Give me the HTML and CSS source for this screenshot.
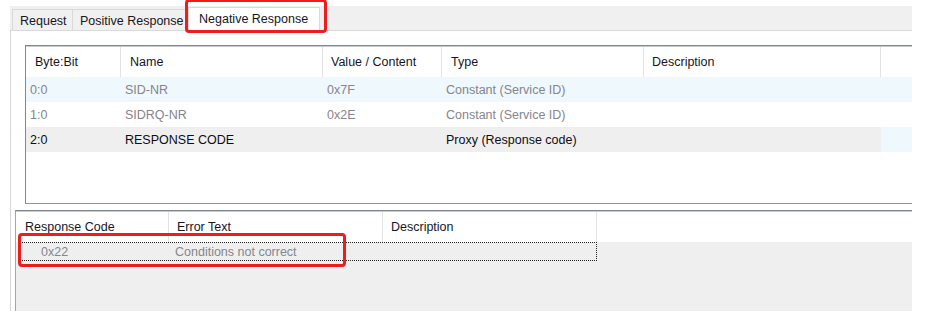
FILE: index.html
```html
<!DOCTYPE html>
<html lang="en">
<head>
    <meta charset="UTF-8">
    <title>Negative Response</title>
    <link rel="stylesheet" href="styles.css">
</head>
<body>
    <div class="dialog">
        <div class="tabs">
            <div class="tab tab-req">Request</div>
            <div class="tab tab-pos">Positive Response</div>
            <div class="tab tab-neg active">Negative Response</div>
        </div>
        <div class="panel">
            <div class="params">
                <div class="row head">
                    <div class="cell">Byte:Bit</div>
                    <div class="cell">Name</div>
                    <div class="cell">Value / Content</div>
                    <div class="cell">Type</div>
                    <div class="cell">Description</div>
                    <div class="cell"></div>
                </div>
                <div class="row alt muted">
                    <div class="cell">0:0</div>
                    <div class="cell">SID-NR</div>
                    <div class="cell">0x7F</div>
                    <div class="cell">Constant (Service ID)</div>
                    <div class="cell"></div>
                    <div class="cell"></div>
                </div>
                <div class="row muted">
                    <div class="cell">1:0</div>
                    <div class="cell">SIDRQ-NR</div>
                    <div class="cell">0x2E</div>
                    <div class="cell">Constant (Service ID)</div>
                    <div class="cell"></div>
                    <div class="cell"></div>
                </div>
                <div class="row sel">
                    <div class="cell">2:0</div>
                    <div class="cell">RESPONSE CODE</div>
                    <div class="cell"></div>
                    <div class="cell">Proxy (Response code)</div>
                    <div class="cell"></div>
                    <div class="cell filler"></div>
                </div>
            </div>
            <div class="codes">
                <div class="row head">
                    <div class="cell">Response Code</div>
                    <div class="cell">Error Text</div>
                    <div class="cell">Description</div>
                    <div class="cell"></div>
                </div>
                <div class="row focus">
                    <div class="cell code">0x22</div>
                    <div class="cell">Conditions not correct</div>
                    <div class="cell"></div>
                </div>
            </div>
        </div>
    </div>

    <div class="mark mark-tab"></div>
    <div class="mark mark-row"></div>
</body>
</html>
```

FILE: styles.css
```css
* {
    margin: 0;
    padding: 0;
    box-sizing: border-box;
}
body {
    position: relative;
    width: 926px;
    height: 317px;
    overflow: hidden;
    background: #fff;
    font-family: "Liberation Sans", Arial, sans-serif;
    font-size: 12.5px;
    color: #16161f;
}
.dialog {
    display: flex;
    flex-direction: column;
    width: 902px;
    height: 305px;
    margin: 6px 0 0 10px;
    background: #f0f0f0;
}

/* tab strip */
.tabs {
    display: flex;
    align-items: flex-end;
    height: 25px;
    padding-left: 2px;
    border-bottom: 1px solid #d9d9d9;
}
.tab {
    height: 21px;
    padding: 4px 0 0 7px;
    border: 1px solid #d9d9d9;
    border-bottom: none;
    margin-right: -1px;
    background: #f0f0f0;
    white-space: nowrap;
    overflow: hidden;
}
.tab-req { width: 61px; }
.tab-pos { width: 119px; }
.tab.active {
    position: relative;
    width: 132px;
    height: 24px;
    margin-left: -2px;
    margin-bottom: -1px;
    padding: 4px 0 0 10px;
    background: #fff;
}

/* panel */
.panel {
    flex: 1;
    display: flex;
    flex-direction: column;
    background: #fff;
    border-left: 1px solid #d4d4d4;
}
.row {
    display: grid;
    align-items: center;
}
.cell {
    white-space: nowrap;
    overflow: hidden;
}

.params {
    height: 159px;
    margin: 14px 0 0 14px;
    border-top: 1px solid #7f8793;
    border-left: 1px solid #828891;
    border-bottom: 1px solid #8f96a1;
    box-shadow: inset 0 1px #c6cbd3;
}
.params .row {
    grid-template-columns: 95px 202px 119px 202px 237px 1fr;
    height: 25px;
}
.params .head {
    height: 30px;
    margin-top: 1px;
}
.head .cell {
    height: 100%;
    display: flex;
    align-items: center;
    padding-left: 9px;
    border-right: 1px solid #e3e3e3;
}
.params .row .cell { padding-left: 4px; }
.params .head .cell { padding-left: 9px; }
.params .head .cell:nth-child(3),
.params .head .cell:nth-child(5) { padding-left: 8px; }
.params .head .cell:last-child { border-right: none; }
.alt { background: #eff8fc; }
.muted { color: #85858d; }
.sel { background: #efefef; color: #0d0d14; }
.sel .filler {
    height: 100%;
    background: #eff8fc;
}

.codes {
    flex: 1;
    margin: 6px 0 0 4px;
    background: #efefef;
    border-top: 1px solid #7f8793;
    border-left: 1px solid #a5a5a5;
    box-shadow: inset 0 1px #c6cbd3;
}
.codes .row {
    grid-template-columns: 153px 214px 214px 1fr;
}
.codes .head {
    height: 30px;
    margin-top: 1px;
    background: #fff;
}
.codes .head .cell { padding-left: 9px; }
.codes .head .cell:nth-child(2),
.codes .head .cell:nth-child(3) { padding-left: 8px; }
.codes .head .cell:last-child { border-right: none; }
.focus {
    width: 579px;
    height: 19px;
    margin-left: 2px;
    grid-template-columns: 151px 214px 1fr;
    border: 1px dotted #222;
    color: #85858d;
}
.focus .cell { padding-left: 3px; }
.focus .code { padding-left: 22px; }

/* red annotation boxes */
.mark {
    position: absolute;
    border: 3px solid #f01c1c;
    border-radius: 4px;
}
.mark-tab {
    left: 185px;
    top: -1px;
    width: 142px;
    height: 34px;
}
.mark-row {
    left: 18px;
    top: 233px;
    width: 328px;
    height: 34px;
}
```
